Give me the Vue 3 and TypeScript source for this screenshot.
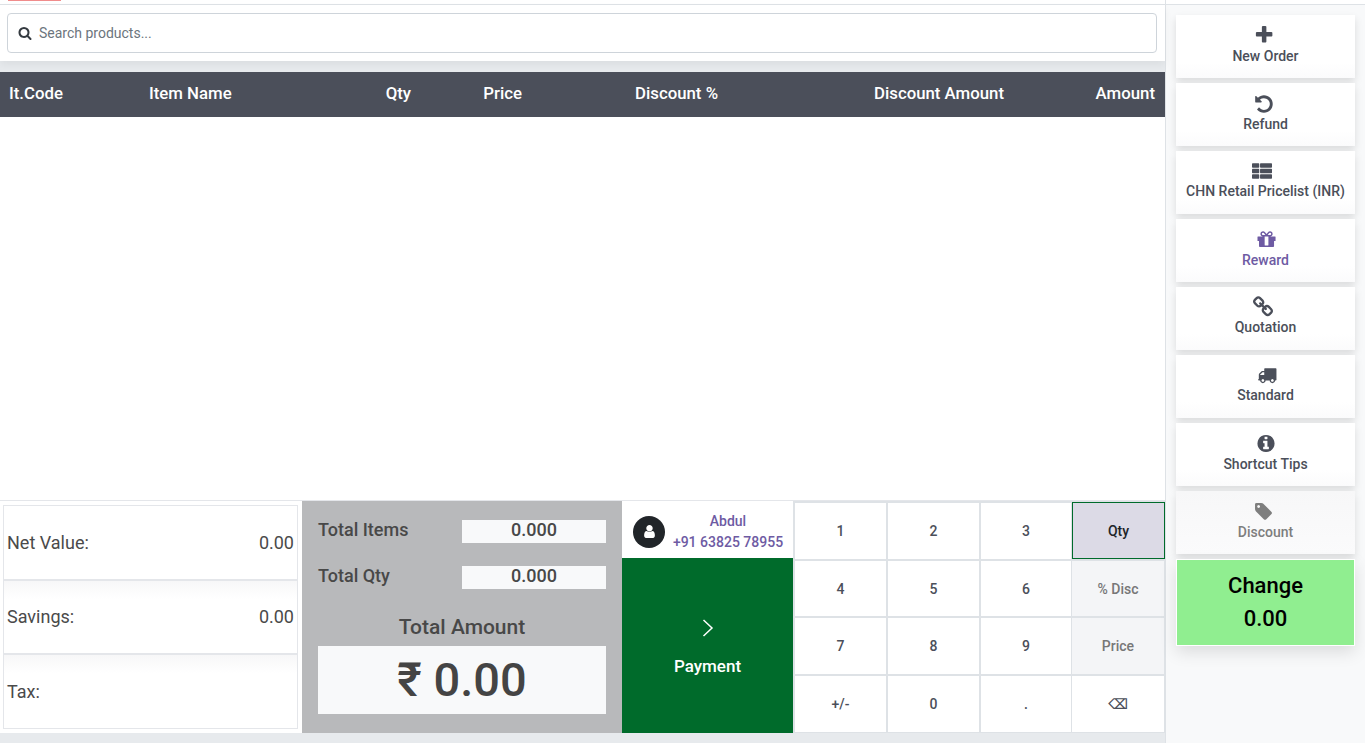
<script setup lang="ts">
interface SideAction { label: string; icon: string; box: string; tone?: string }
const columns: string[] = ['It.Code', 'Item Name', 'Qty', 'Price', 'Discount %', 'Discount Amount', 'Amount']
const actions: SideAction[] = [
  { label: 'New Order', icon: 'plus', box: '202 42 1707 1707' },
  { label: 'Refund', icon: 'undo', box: '200 -69 1750 1750' },
  { label: 'CHN Retail Pricelist (INR)', icon: 'list', box: '358 0 1792 1792', tone: 'tight' },
  { label: 'Reward', icon: 'gift', box: '0 0 1702 1702', tone: 'reward' },
  { label: 'Quotation', icon: 'link', box: '261 82 1629 1629', tone: 'tight' },
  { label: 'Standard', icon: 'truck', box: '-137 -47 1886 1886', tone: 'tight' },
  { label: 'Shortcut Tips', icon: 'info', box: '0 -45 1792 1792' },
  { label: 'Discount', icon: 'tag', box: '215 -45 1792 1792', tone: 'muted' },
]
const paths: Record<string, string> = {
  plus: 'M1600 736v192q0 40-28 68t-68 28h-416v416q0 40-28 68t-68 28h-192q-40 0-68-28t-28-68v-416h-416q-40 0-68-28t-28-68v-192q0-40 28-68t68-28h416v-416q0-40 28-68t68-28h192q40 0 68 28t28 68v416h416q40 0 68 28t28 68z',
  undo: 'M1664 896q0 156-61 298t-164 245-245 164-298 61q-172 0-327-72.5t-264-204.5q-7-10-6.5-22.5t8.5-20.5l137-138q10-9 25-9 16 2 23 12 73 95 179 147t225 52q104 0 198.5-40.5t163.5-109.5 109.5-163.5 40.5-198.5-40.5-198.5-109.5-163.5-163.5-109.5-198.5-40.5q-98 0-188 35.5t-160 101.5l137 138q31 30 14 69-17 40-59 40h-448q-26 0-45-19t-19-45v-448q0-42 40-59 39-17 69 14l130 129q107-101 244.5-156.5t284.5-55.5q156 0 298 61t245 164 164 245 61 298z',
  gift: 'M1056 1356v-716h-320v716q0 25 18 38.5t46 13.5h192q28 0 46-13.5t18-38.5zm-456-844h195l-126-161q-26-31-69-31-40 0-68 28t-28 68 28 68 68 28zm688-96q0-40-28-68t-68-28q-43 0-69 31l-125 161h194q40 0 68-28t28-68zm376 256v320q0 14-9 23t-23 9h-96v416q0 40-28 68t-68 28h-1088q-40 0-68-28t-28-68v-416h-96q-14 0-23-9t-9-23v-320q0-14 9-23t23-9h440q-93 0-158.500-65.500t-65.500-158.500 65.500-158.500 158.500-65.500q107 0 168 77l128 165 128-165q61-77 168-77 93 0 158.500 65.500t65.500 158.500-65.500 158.500-158.500 65.500h440q14 0 23 9t9 23z',
  link: 'M1456 1216q0-40-28-68l-208-208q-28-28-68-28-42 0-72 32 3 3 19 18.500t21.500 21.500 15 19 13 25.500 3.500 27.500q0 40-28 68t-68 28q-15 0-27.500-3.500t-25.500-13-19-15-21.500-21.500-18.500-19q-33 31-33 73 0 40 28 68l206 207q27 27 68 27 40 0 68-26l147-146q28-28 28-67zm-703-705q0-40-28-68l-206-207q-28-28-68-28-39 0-68 27l-147 146q-28 28-28 67 0 40 28 68l208 208q27 27 68 27 42 0 72-31-3-3-19-18.500t-21.500-21.500-15-19-13-25.500-3.500-27.500q0-40 28-68t68-28q15 0 27.500 3.500t25.500 13 19 15 21.500 21.500 18.500 19q33-31 33-73zm895 705q0 120-85 203l-147 146q-83 83-203 83-121 0-204-85l-206-207q-83-83-83-203 0-123 88-209l-88-88q-86 88-208 88-120 0-204-84l-208-208q-84-84-84-204t85-203l147-146q83-83 203-83 121 0 204 85l206 207q83 83 83 203 0 123-88 209l88 88q86-88 208-88 120 0 204 84l208 208q84 84 84 204z',
  truck: 'M640 1408q0-52-38-90t-90-38-90 38-38 90 38 90 90 38 90-38 38-90zm-384-512h384v-256h-158q-13 0-22 9l-195 195q-9 9-9 22v30zm1280 512q0-52-38-90t-90-38-90 38-38 90 38 90 90 38 90-38 38-90zm256-1088v1024q0 15-4 26.500t-13.500 18.500-16.500 11.500-23.500 6-22.500 2-25.500 0-22.500-.5q0 106-75 181t-181 75-181-75-75-181h-384q0 106-75 181t-181 75-181-75-75-181h-64q-3 0-22.500.5t-25.500 0-22.500-2-23.500-6-16.500-11.500-13.500-18.500-4-26.500q0-26 19-45t45-19v-320q0-8-.5-35t0-38 2.500-34.500 6.500-37 14-30.500 22.500-30l198-198q19-19 50.500-32t58.500-13h160v-192q0-26 19-45t45-19h1024q26 0 45 19t19 45z',
  info: 'M1152 1376v-160q0-14-9-23t-23-9h-96v-512q0-14-9-23t-23-9h-320q-14 0-23 9t-9 23v160q0 14 9 23t23 9h96v320h-96q-14 0-23 9t-9 23v160q0 14 9 23t23 9h448q14 0 23-9t9-23zm-128-896v-160q0-14-9-23t-23-9h-192q-14 0-23 9t-9 23v160q0 14 9 23t23 9h192q14 0 23-9t9-23zm640 416q0 209-103 385.500t-279.500 279.500-385.500 103-385.500-103-279.500-279.500-103-385.500 103-385.500 279.500-279.500 385.500-103 385.500 103 279.500 279.500 103 385.500z',
  tag: 'M576 448q0-53-37.500-90.500t-90.500-37.500-90.500 37.500-37.500 90.500 37.500 90.500 90.500 37.500 90.500-37.500 37.500-90.500zm1067 576q0 53-37 90l-491 492q-39 37-91 37-53 0-90-37l-715-716q-38-37-64.500-101t-26.500-117v-416q0-52 38-90t90-38h416q53 0 117 26.500t102 64.500l715 714q37 39 37 91z',
}
const keys: { label: string; tone?: string }[] = [
  { label: '1' }, { label: '2' }, { label: '3' }, { label: 'Qty', tone: 'active' },
  { label: '4' }, { label: '5' }, { label: '6' }, { label: '% Disc', tone: 'off' },
  { label: '7' }, { label: '8' }, { label: '9' }, { label: 'Price', tone: 'off' },
  { label: '+/-' }, { label: '0' }, { label: '.' }, { label: '⌫' },
]
</script>

<template>
  <div class="page">
    <main class="left">
      <div class="topbar"><span class="redmark"></span></div>
      <section class="search-wrap">
        <label class="search">
          <svg class="search-icon" viewBox="0 0 1792 1792"><path fill="currentColor" d="M1216 832q0-185-131.5-316.5t-316.5-131.5-316.5 131.5-131.5 316.5 131.5 316.5 316.5 131.5 316.5-131.5 131.5-316.5zm512 832q0 52-38 90t-90 38q-54 0-90-38l-343-342q-179 124-399 124-143 0-273.5-55.5t-225-150-150-225-55.5-273.5 55.5-273.5 150-225 225-150 273.5-55.5 273.5 55.5 225 150 150 225 55.5 273.5q0 220-124 399l343 343q37 37 37 90z"/></svg>
          <span class="placeholder">Search products...</span>
        </label>
      </section>
      <div class="gap-band"></div>
      <div class="thead">
        <span v-for="c in columns" :key="c" class="th">{{ c }}</span>
      </div>
      <div class="tbody"></div>
      <section class="bottom">
        <div class="summary-wrap">
          <div class="summary">
            <div class="sum-row"><span>Net Value:</span><span>0.00</span></div>
            <div class="sum-row"><span>Savings:</span><span>0.00</span></div>
            <div class="sum-row"><span>Tax:</span></div>
          </div>
        </div>
        <div class="totals">
          <div class="tot-row"><span>Total Items</span><b class="tot-val">0.000</b></div>
          <div class="tot-row second"><span>Total Qty</span><b class="tot-val">0.000</b></div>
          <div class="amount-title">Total Amount</div>
          <div class="amount">₹ 0.00</div>
        </div>
        <div class="pay-col">
          <div class="customer">
            <span class="avatar">
              <svg viewBox="0 0 1792 1792" width="15" height="15"><path fill="#fff" d="M1536 1399q0 109-62.500 187t-150.500 78h-854q-88 0-150.500-78t-62.500-187q0-85 8.500-160.500t31.500-152 58.500-131 94-89 134.500-34.500q131 128 313 128t313-128q76 0 134.500 34.500t94 89 58.500 131 31.500 152 8.500 160.500zm-256-887q0 159-112.500 271.500t-271.500 112.500-271.500-112.500-112.500-271.500 112.500-271.500 271.500-112.500 271.500 112.500 112.500 271.500z"/></svg>
            </span>
            <span class="cust-text"><span>Abdul</span><span>+91 63825 78955</span></span>
          </div>
          <div class="payment">
            <svg viewBox="0 0 16 20" width="16" height="20"><path d="M3.500 2l8.500 8-8.500 8" fill="none" stroke="#fff" stroke-width="1.500"/></svg>
            <span>Payment</span>
          </div>
        </div>
        <div class="numpad">
          <div v-for="k in keys" :key="k.label" class="key" :class="[k.tone, { back: k.label === '⌫' }]">{{ k.label }}</div>
        </div>
      </section>
      <div class="foot-band"></div>
    </main>
    <aside class="side">
      <div v-for="a in actions" :key="a.label" class="action" :class="a.tone">
        <svg class="ico" :viewBox="a.box" width="20" height="20">
          <g v-if="a.icon === 'list'" fill="currentColor">
            <rect x="0" y="206" width="650" height="400" rx="60"/><rect x="720" y="206" width="1072" height="400" rx="60"/>
            <rect x="0" y="696" width="650" height="400" rx="60"/><rect x="720" y="696" width="1072" height="400" rx="60"/>
            <rect x="0" y="1186" width="650" height="400" rx="60"/><rect x="720" y="1186" width="1072" height="400" rx="60"/>
          </g>
          <path v-else fill="currentColor" :d="paths[a.icon]"/>
        </svg>
        <span>{{ a.label }}</span>
      </div>
      <div class="change"><span>Change</span><span>0.00</span></div>
    </aside>
  </div>
</template>

<style>
html, body { margin: 0; background: #fff; overflow: hidden; }
</style>

<style scoped>
.page {
  display: flex;
  width: 1365px;
  height: 743px;
  overflow: hidden;
  font-family: Roboto, "Noto Sans", sans-serif;
  color: #4b4f5a;
}
.left { width: 1165px; display: flex; flex-direction: column; flex: none; }
.topbar { height: 4px; background: #fff; border-bottom: 1px solid #dee2e6; }
.redmark { display: block; width: 53px; height: 1px; margin-left: 8px; background: #f08c8c; }
.search-wrap {
  height: 56px;
  box-sizing: border-box;
  padding: 8px 8px 0 7px;
  background: #fff;
  box-shadow: 0 4px 8px rgba(0, 0, 0, .05);
  position: relative;
}
.search {
  display: flex;
  align-items: center;
  height: 40px;
  box-sizing: border-box;
  border: 1px solid #ced4da;
  border-radius: 4px;
  padding-left: 10px;
  background: #fff;
}
.search-icon { width: 14px; height: 14px; color: #343a40; }
.placeholder { margin-left: 7px; font-size: 14px; color: #6c757d; }
.gap-band { height: 11px; background: #e7eaed; }
.thead {
  display: grid;
  grid-template-columns: 140px 181px 100px 111px 196px 286px 151px;
  height: 45px;
  box-sizing: border-box;
  padding-bottom: 4px;
  align-items: center;
  background: #4b4f5a;
  color: #fff;
  font-size: 16.8px;
  font-weight: 500;
}
.th { padding: 0 10px; text-align: right; white-space: nowrap; }
.th:nth-child(1) { padding-left: 9px; text-align: left; }
.th:nth-child(2) { padding-left: 9px; text-align: left; }
.tbody { height: 383px; background: #fff; }
.bottom {
  display: flex;
  height: 233px;
  border-top: 1px solid #e4e6ea;
  box-sizing: border-box;
}
.summary-wrap { width: 302px; box-sizing: border-box; padding: 4px 4px 4px 3px; flex: none; }
.summary {
  height: 224px;
  box-sizing: border-box;
  border: 1px solid #e4e6ea;
  display: grid;
  grid-template-rows: 73px 74px 75px;
}
.sum-row {
  display: flex;
  align-items: center;
  justify-content: space-between;
  padding: 0 3px 1px;
  font-size: 18px;
  color: #4a4a4a;
  border-top: 2px solid #e4e6ea;
  background: linear-gradient(#f7f7f8, #fff 18px);
}
.sum-row:first-child { border-top: 0; background: #fff; padding-bottom: 0; }
.totals {
  width: 320px;
  flex: none;
  box-sizing: border-box;
  padding: 19px 16px 0;
  background: #b8b9bb;
  color: #484848;
}
.tot-row {
  display: flex;
  align-items: flex-start;
  justify-content: space-between;
  height: 23px;
  font-size: 18px;
  line-height: 19px;
  font-weight: 500;
}
.tot-row.second { margin-top: 23px; }
.tot-val {
  width: 144px;
  height: 23px;
  line-height: 19px;
  text-align: center;
  background: #f8f9fa;
  font-weight: 500;
}
.amount-title { margin-top: 23px; text-align: center; font-size: 21px; font-weight: 500; line-height: 30px; }
.amount {
  height: 68px;
  margin-top: 4px;
  line-height: 68px;
  text-align: center;
  background: #f8f9fa;
  font-size: 47px;
  font-weight: 500;
  color: #444;
}
.pay-col { width: 171px; flex: none; display: flex; flex-direction: column; }
.customer {
  height: 57px;
  display: flex;
  align-items: center;
  box-sizing: border-box;
  padding: 4px 0 0 11px;
  background: #fff;
}
.avatar {
  width: 32px;
  height: 32px;
  border-radius: 50%;
  background: #212529;
  display: flex;
  align-items: center;
  justify-content: center;
  flex: none;
}
.cust-text {
  flex: 1;
  display: flex;
  flex-direction: column;
  align-items: center;
  font-size: 14px;
  font-weight: 500;
  line-height: 21px;
  color: #6e5ba3;
  padding: 0 5px 0 3px;
}
.payment {
  flex: 1;
  display: flex;
  flex-direction: column;
  align-items: center;
  justify-content: center;
  gap: 18px;
  padding-top: 2px;
  background: #006b2b;
  color: #fff;
  font-size: 17px;
  font-weight: 500;
}
.numpad {
  width: 372px;
  flex: none;
  display: grid;
  grid-template-columns: 93px 93px 92px 94px;
  grid-template-rows: 58px 57px 58px 58px;
  background: #dee2e6;
  box-sizing: border-box;
  height: 232px;
}
.key {
  display: flex;
  align-items: center;
  justify-content: center;
  margin: 2px 0 0 2px;
  background: #fff;
  font-size: 14px;
  font-weight: 500;
  color: #4b4f5a;
}
.key:nth-child(4n) { margin-left: 1px; margin-right: 1px; }
.key.active {
  background: #dcdae6;
  border: 1px solid #006b2b;
  color: #212529;
  margin: 1px 0 0 1px;
}
.key.off { background: #f4f5f7; color: #777; }
.key.back { font-family: "DejaVu Sans", sans-serif; font-size: 14px; font-weight: 700; }
.foot-band { height: 10px; background: #e7eaed; }
.side {
  flex: none;
  width: 200px;
  box-sizing: border-box;
  padding: 15px 10px 0 10px;
  border-left: 1px solid #dee2e6;
  background: #f8f9fa;
  display: flex;
  flex-direction: column;
  gap: 5px;
  box-shadow: inset 0 4px 0 #fff, inset 0 5px 0 #dee2e6;
}
.action {
  height: 63px;
  box-sizing: border-box;
  padding-top: 10px;
  display: flex;
  flex-direction: column;
  align-items: center;
  background: linear-gradient(#fff 75%, #fbfbfc);
  font-size: 14px;
  font-weight: 500;
  line-height: 18px;
  color: #4b4f5a;
  box-shadow: 0 4px 8px rgba(0, 0, 0, .12);
}
.ico { flex: none; margin-bottom: 2px; overflow: visible; }
.action.tight .ico { margin-bottom: 1px; }
.action.reward { color: #6e5ba3; }
.action.muted { color: #7e7e7e; background: linear-gradient(#f7f7f8, #fbfbfc); }
.change {
  height: 87px;
  box-sizing: border-box;
  border: 1px solid #fff;
  background: #90ee90;
  display: flex;
  flex-direction: column;
  align-items: center;
  justify-content: center;
  gap: 8px;
  padding-bottom: 1px;
  font-size: 22px;
  font-weight: 500;
  color: #000;
  box-shadow: 0 6px 16px rgba(0, 0, 0, .12);
}
</style>
